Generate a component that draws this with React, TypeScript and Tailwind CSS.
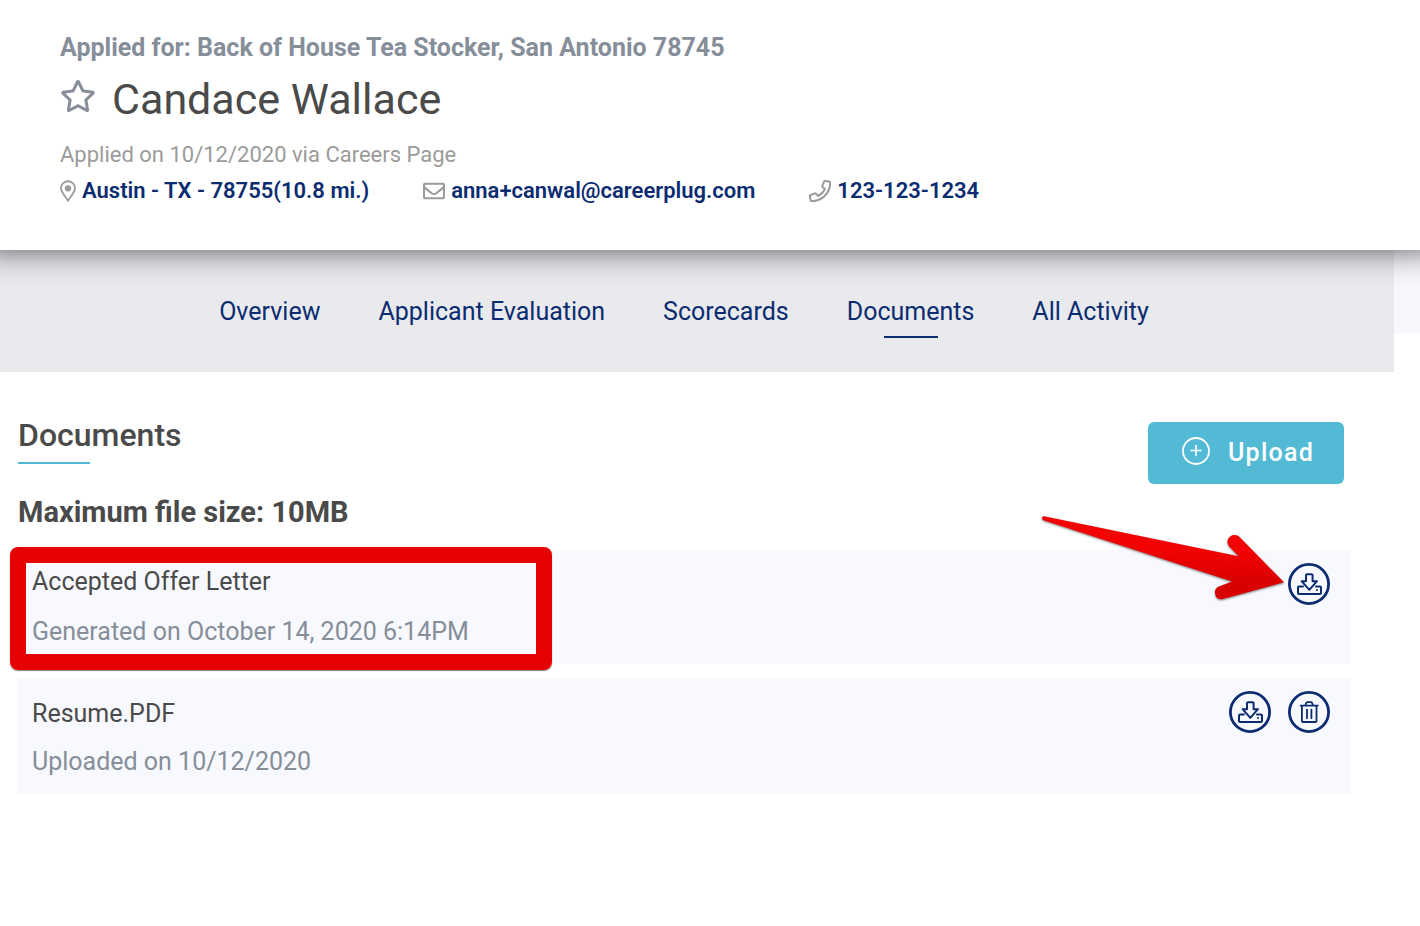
import type { ReactNode } from "react";
import { FaRegEnvelope, FaRegStar } from "react-icons/fa";

const TABS = ["Overview", "Applicant Evaluation", "Scorecards", "Documents", "All Activity"];
const ACTIVE_TAB = "Documents";

function PinIcon() {
  return (
    <svg className="w-4 h-[22px]" viewBox="0 0 384 512" fill="none" stroke="currentColor" aria-hidden="true">
      <path
        strokeWidth={44}
        d="M192 488C60 300 22 264 22 192 22 98 98 22 192 22s170 76 170 170c0 72-38 108-170 296z"
      />
      <circle cx="192" cy="192" r="76" fill="currentColor" stroke="none" />
    </svg>
  );
}

function PhoneIcon() {
  return (
    <svg className="w-[22px] h-[22px]" viewBox="-20 -20 552 552" fill="none" stroke="currentColor" aria-hidden="true">
      <path
        strokeWidth={50}
        strokeLinejoin="round"
        d="M493.4 24.6l-104-24c-11.3-2.6-22.9 3.3-27.5 13.9l-48 112c-4.2 9.8-1.4 21.3 6.9 28l60.6 49.6c-36 76.7-98.9 140.5-177.2 177.2l-49.6-60.6c-6.8-8.3-18.2-11.1-28-6.9l-112 48C3.9 366.5-2 378.1.6 389.4l24 104C27.1 504.2 36.7 512 48 512c256.1 0 464-207.5 464-464 0-11.2-7.7-20.9-18.6-23.4z"
      />
    </svg>
  );
}

function PlusCircleIcon() {
  return (
    <svg className="w-7 h-7 mb-1" viewBox="0 0 28 28" fill="none" stroke="currentColor" aria-hidden="true">
      <circle cx="14" cy="14" r="13" strokeWidth="1.8" />
      <path d="M14 8.5v10M9 13.5h10" strokeWidth="1.6" strokeLinecap="round" />
    </svg>
  );
}

function DownloadIcon() {
  return (
    <svg className="w-[42px] h-[42px]" viewBox="0 0 42 42" fill="none" stroke="currentColor" aria-hidden="true">
      <circle cx="21" cy="21" r="19.6" strokeWidth="2.8" />
      <g strokeWidth="2" strokeLinejoin="round" strokeLinecap="round">
        <path d="M15 23.4H11a1 1 0 0 0-1 1v5.6a1 1 0 0 0 1 1h21a1 1 0 0 0 1-1v-5.6a1 1 0 0 0-1-1H28" />
        <path d="M18 12.2a1 1 0 0 1 1-1h4.600a1 1 0 0 1 1 1v6h4.400l-7.700 8.600-7.700-8.600h4.400z" />
      </g>
      <circle cx="29" cy="27" r="1" fill="currentColor" stroke="none" />
    </svg>
  );
}

function TrashIcon() {
  return (
    <svg className="w-[42px] h-[42px]" viewBox="0 0 42 42" fill="none" stroke="currentColor" aria-hidden="true">
      <circle cx="21" cy="21" r="19.6" strokeWidth="2.8" />
      <path
        strokeWidth="1.8"
        strokeLinejoin="round"
        strokeLinecap="round"
        d="M12.6 14.6h17.2M17.4 14.2l1-2.4a1 1 0 0 1 .9-.6h3.8a1 1 0 0 1 .9.6l1 2.4M13.9 14.8V30a1 1 0 0 0 1 1h12.6a1 1 0 0 0 1-1V14.8M19 18.6v8.6M23.4 18.6v8.6"
      />
    </svg>
  );
}

function Arrow() {
  return (
    <svg
      className="absolute right-[62px] -top-9 w-[250px] h-[90px] pointer-events-none"
      viewBox="0 0 250 90"
      aria-hidden="true"
    >
      <defs>
        <linearGradient id="arrow" x1="0.55" y1="0" x2="0.45" y2="1">
          <stop offset="0.4" stopColor="#f20202" />
          <stop offset="0.75" stopColor="#d90000" />
        </linearGradient>
      </defs>
      <path
        fill="url(#arrow)"
        className="drop-shadow-[0_1px_1px_rgba(0,0,0,0.5)]"
        d="M6 2.2Q4 2 4 4Q4 5.6 5.4 6.2L194 67.5L181 72.5A6.7 6.7 0 0 0 184 85.3L246 68.3L202 23.6A6.7 6.7 0 0 0 191 32.2L200.5 42.2Z"
      />
    </svg>
  );
}

function ContactLink({ icon, href, children }: { icon: ReactNode; href: string; children: ReactNode }) {
  return (
    <a href={href} className="flex items-center gap-1.5 text-[22px] leading-7 font-semibold text-[#0b2c70]">
      <span className="text-[#9b9b9b]">{icon}</span>
      {children}
    </a>
  );
}

function IconButton({ label, children }: { label: string; children: ReactNode }) {
  return (
    <button type="button" aria-label={label} className="rounded-full text-[#0b2c70]">
      {children}
    </button>
  );
}

export default function App() {
  return (
    <div className="min-h-screen bg-white font-[Roboto,sans-serif] text-[#4a4a4a]">
      <header className="relative z-10 bg-white px-[60px] pt-8 pb-[45px] shadow-[0_-20px_30px_20px_rgba(0,0,0,0.65)]">
        <p className="text-[25px] leading-8 font-bold text-[#868e99]">
          Applied for: Back of House Tea Stocker, San Antonio 78745
        </p>
        <div className="flex items-start gap-4 mt-2">
          <button type="button" aria-label="Favorite" className="mt-1.5 text-[#868e99]">
            <FaRegStar className="w-9 h-9" />
          </button>
          <h1 className="text-[43px] leading-[54px]">Candace Wallace</h1>
        </div>
        <p className="mt-[15px] text-[22px] leading-7 text-[#9b9b9b]">Applied on 10/12/2020 via Careers Page</p>
        <div className="flex flex-wrap gap-x-[54px] mt-2">
          <ContactLink icon={<PinIcon />} href="#map">Austin - TX - 78755(10.8 mi.)</ContactLink>
          <ContactLink icon={<FaRegEnvelope className="w-[22px] h-[22px]" />} href="mailto:anna+canwal@careerplug.com">
            anna+canwal@careerplug.com
          </ContactLink>
          <ContactLink icon={<PhoneIcon />} href="tel:123-123-1234">123-123-1234</ContactLink>
        </div>
      </header>

      <div className="flex items-start">
        <nav className="flex-1 flex justify-center gap-[58px] bg-[#e9eaee] pt-11 pb-[34px] pr-[26px]">
          {TABS.map((tab) => (
            <a
              key={tab}
              href="#"
              aria-current={tab === ACTIVE_TAB ? "page" : undefined}
              className="flex flex-col items-center gap-1.5 text-[25px] leading-9 text-[#0b2c70]"
            >
              {tab}
              {tab === ACTIVE_TAB && <span className="w-[54px] h-0.5 bg-[#0b2c70]" />}
            </a>
          ))}
        </nav>
        <div className="w-[26px] h-[84px] bg-[#f7f8fd]" />
      </div>

      <main className="pl-[18px] pr-[70px] pt-[42px]">
        <div className="flex items-start justify-between pr-1.5">
          <div>
            <h2 className="text-[32px] leading-[42px] font-medium">Documents</h2>
            <div className="mt-1.5 w-[72px] h-0.5 bg-[#53bad5]" />
            <p className="mt-7 text-[29px] leading-10 font-bold">Maximum file size: 10MB</p>
          </div>
          <button
            type="button"
            className="flex items-center gap-[18px] mt-2 h-[62px] pl-[34px] pr-[30px] rounded-md bg-[#53bad5] text-[25px] font-medium tracking-wider text-white"
          >
            <PlusCircleIcon />
            Upload
          </button>
        </div>

        <ul className="mt-[18px] flex flex-col gap-3.5">
          <li className="relative flex items-start justify-between bg-[#f8f9fe] pl-3.5 pr-5 pt-[13px] pb-[13px]">
            <div className="text-[25px] leading-[38px]">
              <p>Accepted Offer Letter</p>
              <p className="mt-3 text-[#868e99]">Generated on October 14, 2020 6:14PM</p>
            </div>
            <IconButton label="Download Accepted Offer Letter"><DownloadIcon /></IconButton>
            <div className="absolute -left-2 -top-[3px] w-[542px] h-[123px] rounded-lg border-16 border-[#e60202] shadow-[0_1px_1px_rgba(0,0,0,0.5)] pointer-events-none" />
            <Arrow />
          </li>
          <li className="flex items-start justify-between bg-[#f8f9fe] pl-3.5 pr-5 pt-[13px] pb-[13px]">
            <div className="pt-1 text-[25px] leading-[38px]">
              <p>Resume.PDF</p>
              <p className="mt-2.5 text-[#868e99]">Uploaded on 10/12/2020</p>
            </div>
            <div className="flex gap-[17px]">
              <IconButton label="Download Resume.PDF"><DownloadIcon /></IconButton>
              <IconButton label="Delete Resume.PDF"><TrashIcon /></IconButton>
            </div>
          </li>
        </ul>
      </main>
    </div>
  );
}
